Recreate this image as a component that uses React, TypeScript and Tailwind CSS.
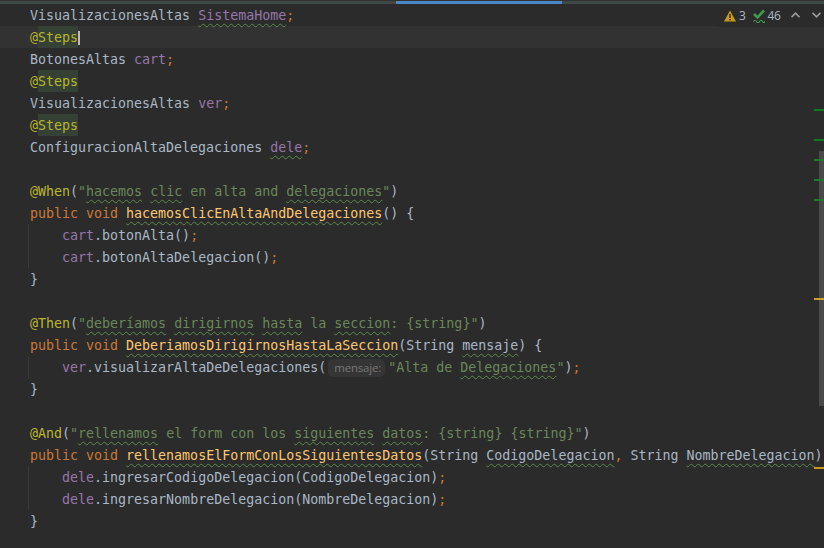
import React from 'react';

type Tone = 'plain' | 'field' | 'semi' | 'kw' | 'fn' | 'ann' | 'str' | 'param';

interface Token {
  t: string;
  c?: Tone;
  wave?: boolean;
  mark?: boolean;
}

const toneClass: Record<Tone, string> = {
  plain: 'text-[#a9b7c6]',
  field: 'text-[#9876aa]',
  semi: 'text-[#cc7832]',
  kw: 'text-[#cc7832]',
  fn: 'text-[#ffc66d]',
  ann: 'text-[#bbb529]',
  str: 'text-[#6a8759]',
  param: 'text-[#a9b7c6]',
};

const S = (t: string): Token => ({ t, c: 'plain' });
const F = (t: string, wave = false): Token => ({ t, c: 'field', wave });
const K = (t: string): Token => ({ t, c: 'kw' });
const Q = (t: string, wave = false): Token => ({ t, c: 'str', wave });

const steps: Token[] = [{ t: '@', c: 'ann' }, { t: 'Steps', c: 'ann', mark: true }];

const lines: Token[][] = [
  [S('VisualizacionesAltas '), F('SistemaHome', true), K(';')],
  steps,
  [S('BotonesAltas '), F('cart'), K(';')],
  steps,
  [S('VisualizacionesAltas '), F('ver'), K(';')],
  steps,
  [S('ConfiguracionAltaDelegaciones '), F('dele', true), K(';')],
  [],
  [{ t: '@When', c: 'ann' }, S('('), Q('"'), Q('hacemos', true), Q(' '), Q('clic', true), Q(' en alta and '), Q('delegaciones', true), Q('"'), S(')')],
  [K('public void '), { t: 'hacemosClicEnAltaAndDelegaciones', c: 'fn', wave: true }, S('() {')],
  [S('    '), F('cart'), S('.botonAlta()'), K(';')],
  [S('    '), F('cart'), S('.botonAltaDelegacion()'), K(';')],
  [S('}')],
  [],
  [{ t: '@Then', c: 'ann' }, S('('), Q('"'), Q('deberíamos', true), Q(' '), Q('dirigirnos', true), Q(' '), Q('hasta', true), Q(' la '), Q('seccion', true), Q(': {string}"'), S(')')],
  [K('public void '), { t: 'DeberiamosDirigirnosHastaLaSeccion', c: 'fn', wave: true }, S('(String '), { t: 'mensaje', c: 'param', wave: true }, S(') {')],
  [S('    '), F('ver'), S('.visualizarAltaDeDelegaciones(')],
  [S('}')],
  [],
  [{ t: '@And', c: 'ann' }, S('('), Q('"'), Q('rellenamos', true), Q(' el form con los '), Q('siguientes', true), Q(' '), Q('datos', true), Q(': {string} {string}"'), S(')')],
  [K('public void '), { t: 'rellenamosElFormConLosSiguientesDatos', c: 'fn', wave: true }, S('(String '), { t: 'CodigoDelegacion', c: 'param', wave: true }, K(', '), S('String '), { t: 'NombreDelegacion', c: 'param', wave: true }, S(')')],
  [S('    '), F('dele'), S('.ingresarCodigoDelegacion(CodigoDelegacion)'), K(';')],
  [S('    '), F('dele'), S('.ingresarNombreDelegacion(NombreDelegacion)'), K(';')],
  [S('}')],
];

// rows of a method body get the indent guide
const guideRows = [10, 11, 16, 21, 22];

const Tok: React.FC<{ token: Token }> = ({ token }) => (
  <span
    className={[
      toneClass[token.c ?? 'plain'],
      token.wave ? 'underline decoration-wavy decoration-[#5e8a4c] decoration-1 underline-offset-[3px]' : '',
      token.mark ? 'bg-[#344134] inline-block h-[21px] shadow-[0_-1px_0_#344134]' : '',
    ].join(' ')}
  >
    {token.t}
  </span>
);

const marks = [
  { top: 109, cls: 'bg-[#0f7a1d]' },
  { top: 139, cls: 'bg-[#0f7a1d]' },
  { top: 159, cls: 'bg-[#1f7a2b]' },
  { top: 179, cls: 'bg-[#1f7a2b]' },
  { top: 199, cls: 'bg-[#1f7a2b]' },
  { top: 298, cls: 'bg-[#c9a227]' },
  { top: 467, cls: 'bg-[#c9961a]' },
];

export default function App() {
  return (
    <div className="relative w-[824px] h-[548px] overflow-hidden bg-[#2b2b2b] font-['DejaVu_Sans_Mono',monospace] text-[13.3px]">
      <div className="h-[4px] border-t border-[#2f3230] bg-[#3f4844] flex">
        <div className="ml-[396px] w-[166px] bg-[#4a88c7]" />
      </div>
      {lines.map((line, i) => (
        <div
          key={i}
          className={`h-[22px] leading-[22px] pt-px whitespace-pre ${i === 1 ? 'bg-[#323232]' : ''} ${
            guideRows.includes(i) ? 'ml-[28px] pl-[1px] border-l border-[#393939]' : 'pl-[30px]'
          }`}
        >
          {line.map((token, j) => (
            <Tok key={j} token={token} />
          ))}
          {i === 1 && <span className="inline-block w-[2px] h-[14px] bg-[#bbbbbb] align-middle" />}
          {i === 16 && (
            <>
              <span className="inline-block h-[18px] leading-[18px] w-[57px] ml-[2px] mr-[3px] pl-[6px] overflow-hidden rounded-[5px] bg-[#353535] text-[#787878] text-[11.5px] tracking-[-0.2px] font-['Open_Sans',sans-serif] align-middle">
                mensaje:
              </span>
              <Tok token={Q('"Alta de ')} />
              <Tok token={Q('Delegaciones', true)} />
              <Tok token={Q('"')} />
              <Tok token={S(')')} />
              <Tok token={K(';')} />
            </>
          )}
        </div>
      ))}

      {/* inspection widget */}
      <div className="absolute top-[4px] right-0 w-[109px] h-[23px] rounded-bl-[4px] bg-[#2b2b2b] flex items-center pl-[9px] text-[12px] tracking-[-0.3px] font-['Open_Sans',sans-serif] text-[#a9b7c6]">
        <svg width="12" height="12" viewBox="0 0 12 12" className="mr-[3px]">
          <path d="M6 0.5 L12 11.5 H0 Z" fill="#c79a1e" />
          <rect x="5.3" y="4" width="1.4" height="4" fill="#2b2b2b" />
          <rect x="5.3" y="9" width="1.4" height="1.4" fill="#2b2b2b" />
        </svg>
        <span>3</span>
        <svg width="12" height="14" viewBox="0 0 12 14" className="ml-[7px] mr-[3px]">
          <path d="M1 5 L4.5 8.5 L11 1.5" fill="none" stroke="#3f9a4b" strokeWidth="2.6" />
          <path d="M0.5 12.5 Q2 10 3.5 12.5 T6.5 12.5 T9.5 12.5 T12 12" fill="none" stroke="#3f9a4b" strokeWidth="1.2" />
        </svg>
        <span>46</span>
        <svg width="9" height="6" viewBox="0 0 9 6" className="ml-[10px] -mt-[2px]">
          <path d="M0.5 5.2 L4.5 1.2 L8.5 5.2" fill="none" stroke="#9a9a9a" strokeWidth="1.7" />
        </svg>
        <svg width="9" height="6" viewBox="0 0 9 6" className="ml-[12px] -mt-[2px]">
          <path d="M0.5 0.8 L4.5 4.8 L8.5 0.8" fill="none" stroke="#9a9a9a" strokeWidth="1.7" />
        </svg>
      </div>

      {/* editor scrollbar and error stripes */}
      <div className="absolute top-[151px] right-0 w-[5px] h-[255px] bg-[#4a4a4a]" />
      {marks.map((m, i) => (
        <div key={i} className={`absolute left-[814px] w-[10px] h-[2px] ${m.cls}`} style={{ top: m.top }} />
      ))}
    </div>
  );
}
